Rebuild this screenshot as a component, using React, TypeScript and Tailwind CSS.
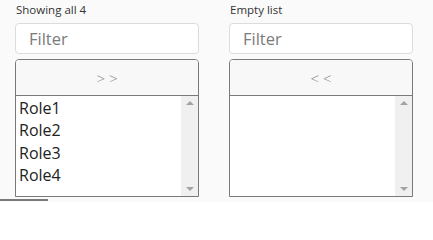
import React from 'react';

const font = { fontFamily: '"Open Sans", "Noto Sans", sans-serif' };

const Column = ({ label, button, items }: { label: string; button: string; items: string[] }) => {
  return (
    <div className="w-[184px] flex flex-col">
      <div className="h-[23px] pt-[2px] pl-px text-[11.5px] leading-[16px] text-[#333]">{label}</div>
      <input
        className="h-[31px] w-full rounded-[4px] border border-[#dcdcdc] bg-white px-[13px] text-[16.5px] text-[#444] placeholder:text-[#7b7b7b] outline-none"
        placeholder="Filter"
      />
      <div className="mt-[5px] flex flex-col rounded-t-[4px] border border-[#7a7a7a]">
        <button className="h-[36px] w-full rounded-t-[3px] border-b border-[#7a7a7a] bg-[#f8f8f8] pt-[1px] text-[15px] font-light text-[#888]">
          {button}
        </button>
        <div className="flex h-[100px] bg-white">
          <div className="flex-1 pl-[3px] pt-[1px]">
            {items.map((item) => (
              <div key={item} className="h-[22.3px] text-[16px] leading-[22px] text-[#222]">
                {item}
              </div>
            ))}
          </div>
          <div className="flex w-[17px] flex-col items-center justify-between bg-[#f0f0f0] py-[5px]">
            <div className="h-0 w-0 border-x-[4px] border-b-[4px] border-x-transparent border-b-[#a3a3a3]" />
            <div className="h-0 w-0 border-x-[4px] border-t-[4px] border-x-transparent border-t-[#a3a3a3]" />
          </div>
        </div>
      </div>
    </div>
  );
};

export default function App() {
  return (
    <div className="relative h-[202px] w-[433px] overflow-hidden bg-[#fafafa]" style={font}>
      <div className="flex gap-[30px] pl-[15px] pt-0">
        <Column label="Showing all 4" button="> >" items={['Role1', 'Role2', 'Role3', 'Role4']} />
        <Column label="Empty list" button="< <" items={[]} />
      </div>
      <div className="absolute bottom-[1px] left-0 h-[2px] w-[48px] bg-[#7a7a7a]" />
    </div>
  );
}
